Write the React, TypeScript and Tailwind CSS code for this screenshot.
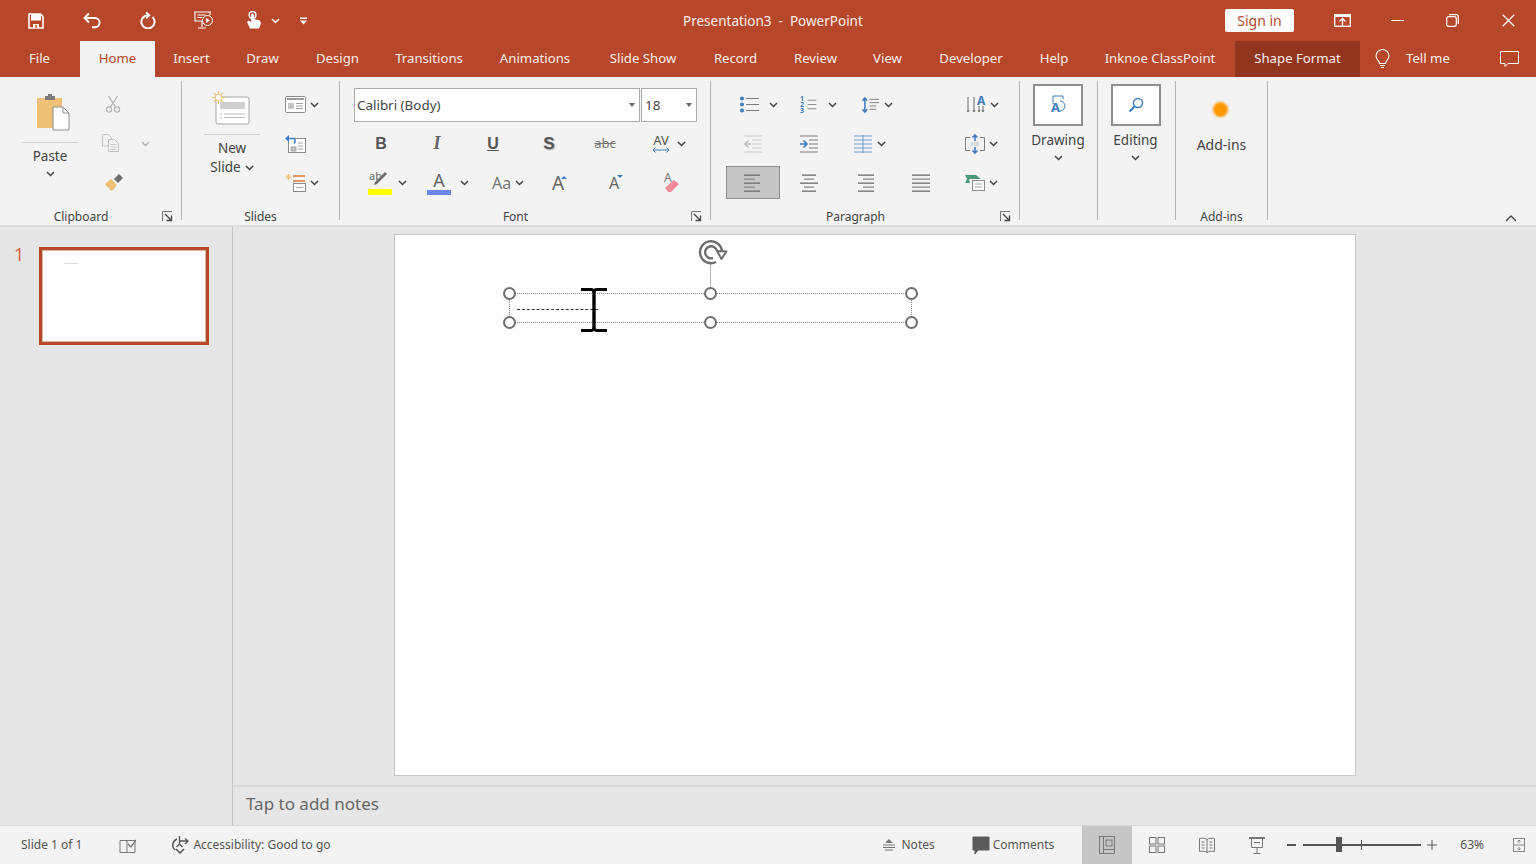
import type { ReactNode } from "react"

const uiFont = "font-['Noto_Sans',sans-serif]"

const tabs = [
  { name: "File", cls: "w-[69px] ml-[5px]" },
  { name: "Home", cls: "w-[75px] ml-[6px] bg-[#f3f3f3] text-[#b7472a]" },
  { name: "Insert", cls: "w-[73px]" },
  { name: "Draw", cls: "w-[69px]" },
  { name: "Design", cls: "w-[81px]" },
  { name: "Transitions", cls: "w-[102px]" },
  { name: "Animations", cls: "w-[110px]" },
  { name: "Slide Show", cls: "w-[106px]" },
  { name: "Record", cls: "w-[79px]" },
  { name: "Review", cls: "w-[81px]" },
  { name: "View", cls: "w-[63px]" },
  { name: "Developer", cls: "w-[104px]" },
  { name: "Help", cls: "w-[62px]" },
  { name: "Inknoe ClassPoint", cls: "w-[150px]" },
  { name: "Shape Format", cls: "w-[125px] bg-[#91351f]" },
]

function Chev({ color = "#444" }: { color?: string }) {
  return (
    <svg width="9" height="6" viewBox="0 0 9 6" className="shrink-0">
      <path d="M1 1l3.5 3.5L8 1" fill="none" stroke={color} strokeWidth="1.5" />
    </svg>
  )
}

function Launcher() {
  return (
    <svg width="11" height="11" viewBox="0 0 11 11" className="absolute right-[8px] bottom-[3px]">
      <path d="M.5 10V.5H10" fill="none" stroke="#777" />
      <path d="M3 3l6 6M9.5 4.5v5h-5" fill="none" stroke="#444" strokeWidth="1.3" />
    </svg>
  )
}

function Group({ label, width, launcher, children }: { label?: string; width: string; launcher?: boolean; children: ReactNode }) {
  return (
    <div className={`relative flex h-[139px] shrink-0 flex-col border-r border-[#b3b3b3] ${width}`}>
      <div className="flex-1">{children}</div>
      <div className={`relative -mb-[5px] h-[16px] text-center text-[12px] leading-[16px] text-[#444] ${launcher ? "pr-[19px]" : ""}`}>
        {label}
        {launcher && <Launcher />}
      </div>
    </div>
  )
}

function Row({ children, className = "" }: { children: ReactNode; className?: string }) {
  return <div className={`flex h-[39px] items-center ${className}`}>{children}</div>
}

function Lines({ kind }: { kind: "left" | "center" | "right" | "justify" }) {
  const rows = kind === "left"
    ? [[0, 16], [0, 11], [0, 16], [0, 11], [0, 16]]
    : kind === "center"
      ? [[2, 14], [4, 10], [0, 18], [4, 10], [2, 14]]
      : kind === "right"
        ? [[2, 16], [7, 11], [2, 16], [7, 11], [2, 16]]
        : [[0, 18], [0, 18], [0, 18], [0, 18], [0, 18]]
  return (
    <svg width="18" height="18" viewBox="0 0 18 18">
      {rows.map(([x, w], i) => (
        <rect key={i} x={x} y={i * 4 + 0.5} width={w} height="1.3" fill={i % 2 ? "#8a8a8a" : "#6d6d6d"} />
      ))}
    </svg>
  )
}

function Handle({ className }: { className: string }) {
  return <div className={`absolute h-[13px] w-[13px] rounded-full border-2 border-[#6e6e6e] bg-white ${className}`} />
}

export default function App() {
  return (
    <div className={`flex h-[864px] w-[1536px] flex-col overflow-hidden bg-[#e6e6e6] ${uiFont}`}>
      {/* title bar */}
      <div className="flex h-[41px] shrink-0 items-center bg-[#b7472a] text-white">
        <div className="ml-[8px] flex items-center">
          <div className="flex w-[56px] justify-center">
            <svg width="16" height="16" viewBox="0 0 16 16">
              <path d="M1 1h11.5L15 3.5V15H1z" fill="none" stroke="#fff" strokeWidth="1.6" />
              <rect x="3" y="1" width="10" height="6.5" fill="#fff" />
              <rect x="5" y="11" width="6" height="4" fill="#fff" />
              <rect x="7.5" y="12" width="1.4" height="3" fill="#b7472a" />
            </svg>
          </div>
          <div className="flex w-[56px] justify-center">
            <svg width="18" height="17" viewBox="0 0 18 17">
              <path d="M6 1.5L1.5 6 6 10.5M2 6h10a4.6 4.6 0 0 1 0 9.2H9" fill="none" stroke="#fff" strokeWidth="1.9" />
            </svg>
          </div>
          <div className="flex w-[55px] justify-center">
            <svg width="17" height="17" viewBox="0 0 17 17">
              <path d="M9 3.200A6.600 6.600 0 1 0 13.500 5" fill="none" stroke="#fff" strokeWidth="2" />
              <path d="M7 .3L10.500 3.200 7 6.500" fill="none" stroke="#fff" strokeWidth="1.700" />
            </svg>
          </div>
          <div className="flex w-[57px] justify-center">
            <svg width="20" height="19" viewBox="0 0 20 19">
              <path d="M0 1h17M1 1v9h8M16 1v3M8 10v6M4 17h8" fill="none" stroke="#fff" strokeWidth="1.1" />
              <path d="M3.5 4h8M3.5 6.5h5" stroke="#fff" />
              <circle cx="13.5" cy="9.5" r="5" fill="none" stroke="#fff" />
              <path d="M12 7l4 2.5-4 2.5z" fill="#fff" />
            </svg>
          </div>
          <div className="flex items-center pl-[14px]">
            <svg width="16" height="19" viewBox="0 0 16 19">
              <circle cx="6.5" cy="4" r="3.4" fill="none" stroke="#fff" strokeWidth="1.4" />
              <path d="M5 4v7L2.5 9.5 1 11l3 6.5h9l2-5-1-3-6-1.5V4a1.5 1.5 0 0 0-3 0z" fill="#fff" />
            </svg>
            <div className="ml-[9px]"><Chev color="#fff" /></div>
            <svg width="7" height="8" viewBox="0 0 7 8" className="ml-[20px]">
              <path d="M0 .5h7V2H0zM0 3.5h7L3.5 7.5z" fill="#fff" />
            </svg>
          </div>
        </div>
        <div className="mt-[1px] ml-[376px] text-[13.5px] whitespace-pre text-[#fbeeea]">Presentation3  -  PowerPoint</div>
        <div className="ml-auto flex items-center">
          <div className="flex h-[23px] w-[69px] items-center justify-center rounded-[2px] bg-white text-[14px] text-[#b7472a]">Sign in</div>
          <div className="flex w-[76px] justify-center pl-[20px]">
            <svg width="17" height="13" viewBox="0 0 17 13">
              <rect x=".7" y=".7" width="15.6" height="11.6" fill="none" stroke="#fff" strokeWidth="1.3" />
              <rect x="1" y="1" width="15" height="2" fill="#fff" />
              <path d="M8.5 12V5M5.5 7.5l3-3 3 3" fill="none" stroke="#fff" strokeWidth="1.3" />
            </svg>
          </div>
          <div className="flex w-[55px] justify-center">
            <div className="h-[1.5px] w-[13px] bg-white" />
          </div>
          <div className="flex w-[55px] justify-center">
            <svg width="13" height="13" viewBox="0 0 13 13">
              <rect x=".7" y="2.7" width="9.6" height="9.6" rx="2" fill="none" stroke="#fff" strokeWidth="1.2" />
              <path d="M3 .7h7.3a2 2 0 0 1 2 2V10" fill="none" stroke="#fff" strokeWidth="1.2" />
            </svg>
          </div>
          <div className="flex w-[56px] justify-center">
            <svg width="13" height="13" viewBox="0 0 13 13">
              <path d="M.7.7l11.6 11.6M12.3.7L.7 12.3" fill="none" stroke="#fff" strokeWidth="1.3" />
            </svg>
          </div>
        </div>
      </div>

      {/* tabs */}
      <div className="flex h-[36px] shrink-0 items-stretch bg-[#b7472a] text-[13.2px] text-[#fbeeea]">
        {tabs.map((t) => (
          <div key={t.name} className={`flex shrink-0 items-center justify-center ${t.cls}`}>{t.name}</div>
        ))}
        <div className="ml-[15px] flex items-center">
          <svg width="15" height="20" viewBox="0 0 15 20">
            <path d="M4.5 14.5c0-2.5-3.5-4-3.5-7.5a6.5 6.5 0 0 1 13 0c0 3.500-3.500 5-3.500 7.500z" fill="none" stroke="#fff" strokeWidth="1.1" />
            <path d="M5 16.500h5M6 18.500h3" stroke="#fff" />
          </svg>
          <span className="ml-[16px]">Tell me</span>
        </div>
        <div className="mr-[17px] ml-auto flex items-center">
          <svg width="19" height="17" viewBox="0 0 19 17">
            <path d="M.5.5h18v12H8l-3 3v-3H.5z" fill="none" stroke="#fff" />
          </svg>
        </div>
      </div>

      {/* ribbon */}
      <div className="flex h-[150px] shrink-0 border-b-2 border-[#dedede] bg-[#f3f3f3] pt-[4px] text-[#444]">
        <Group label="Clipboard" width="w-[182px]" launcher>
          <div className="flex pl-[22px]">
            <div className="flex w-[56px] flex-col items-center pt-[12px]">
              <svg width="34" height="38" viewBox="0 0 34 38" className="ml-[6px]">
                <path d="M1 5h25v30H1z" fill="#eec177" />
                <path d="M9 3h3V1h4v2h3v4H9z" fill="#7c7c7c" />
                <path d="M17 14h10l6 6v17H17z" fill="#fff" stroke="#8e8e8e" />
                <path d="M27 14v6h6" fill="none" stroke="#8e8e8e" />
              </svg>
              <div className="mt-[11px] h-px w-[56px] bg-[#d0d0d0]" />
              <div className="mt-[4px] text-[13.5px] leading-[19px] text-[#444]">Paste</div>
              <div className="mt-[5px]"><Chev /></div>
            </div>
            <div className="flex flex-col pt-[4px] pl-[27px]">
              <Row>
                <svg width="16" height="18" viewBox="0 0 16 18" className="-mt-[1px]">
                  <path d="M3.500 1l7 11M12.500 1l-7 11" stroke="#b4b4b4" strokeWidth="1.3" />
                  <circle cx="4" cy="14.500" r="2.600" fill="none" stroke="#b4b4b4" strokeWidth="1.2" />
                  <circle cx="12" cy="14.500" r="2.600" fill="none" stroke="#b4b4b4" strokeWidth="1.2" />
                </svg>
              </Row>
              <Row className="-ml-[3px]">
                <svg width="17" height="18" viewBox="0 0 17 18" className="-mt-[1px]">
                  <path d="M.5.500h6l3 3V12H.5z" fill="#f3f3f3" stroke="#c2c2c2" />
                  <path d="M6.500 5.500h6l4 4v8h-10z" fill="#f3f3f3" stroke="#c2c2c2" />
                  <path d="M8.500 10.500h6M8.500 13h6M8.500 15.500h6" stroke="#c9c9c9" />
                </svg>
                <div className="ml-[22px]"><Chev color="#b0b0b0" /></div>
              </Row>
              <Row>
                <svg width="19" height="17" viewBox="0 0 19 17">
                  <path d="M0 10l6-5 6 6-5 6-3-2 1-2-2 1z" fill="#eec177" />
                  <path d="M9 5l5-5 4 4-5 5z" fill="#6f6f6f" />
                </svg>
              </Row>
            </div>
          </div>
        </Group>

        <Group label="Slides" width="w-[158px]">
          <div className="flex pl-[22px]">
            <div className="flex w-[56px] flex-col items-center pt-[10px]">
              <svg width="38" height="34" viewBox="0 0 38 34" className="-ml-[2px]">
                <rect x="4" y="6" width="33" height="27" rx="2" fill="#fff" stroke="#a5a5a5" />
                <rect x="8" y="11" width="25" height="7" fill="#cfcfcf" />
                <path d="M12 23h21M12 26.500h21M8 23h2M8 26.500h2" stroke="#bdbdbd" />
                <path d="M6.500 0v13M0 6.500h13M2 2l9 9M11 2l-9 9" stroke="#eec177" strokeWidth="1.2" />
                <circle cx="6.500" cy="6.500" r="3.200" fill="#fff" stroke="#eec177" />
              </svg>
              <div className="mt-[9px] h-px w-[56px] bg-[#d0d0d0]" />
              <div className="mt-[4px] text-[13.5px] leading-[19px]">New</div>
              <div className="flex items-center gap-[4px] text-[13.5px] leading-[19px]">Slide <Chev /></div>
            </div>
            <div className="flex flex-col pt-[4px] pl-[25px]">
              <Row>
                <svg width="21" height="17" viewBox="0 0 21 17">
                  <rect x=".5" y=".5" width="20" height="16" rx="1" fill="#fff" stroke="#8a8a8a" />
                  <path d="M2 3h17" stroke="#9c9c9c" strokeWidth="2" />
                  <rect x="3" y="7" width="6" height="6" fill="#c5c5c5" />
                  <path d="M11 7.500h7M11 10h7M11 12.500h7" stroke="#a0a0a0" />
                </svg>
                <div className="ml-[4px]"><Chev /></div>
              </Row>
              <Row>
                <svg width="21" height="18" viewBox="0 0 21 18">
                  <rect x="3.500" y="3.500" width="17" height="14" fill="#fff" stroke="#8a8a8a" />
                  <path d="M6 12h5v4H6zM13 8h5M13 11h5M13 14h5" fill="#c5c5c5" stroke="#a0a0a0" />
                  <path d="M2.500 3.500H9a3.500 3.500 0 0 1 0 5" fill="none" stroke="#3f7cbc" strokeWidth="1.700" />
                  <path d="M4 0L0 3.500 4 7z" fill="#3f7cbc" />
                </svg>
              </Row>
              <Row>
                <svg width="21" height="19" viewBox="0 0 21 19">
                  <path d="M.5 4h6M3.500 1v6M1 1.500l5 5M6 1.500l-5 5" stroke="#eec177" />
                  <path d="M8 3h12M8 8h12" stroke="#dd7b3f" strokeWidth="1.500" />
                  <rect x="8.500" y="10.500" width="12" height="8" fill="#fff" stroke="#8a8a8a" />
                  <path d="M11 14.500h7" stroke="#a0a0a0" />
                </svg>
                <div className="ml-[4px]"><Chev /></div>
              </Row>
            </div>
          </div>
        </Group>

        <Group label="Font" width="w-[371px]" launcher>
          <div className="pt-[4px] pl-[14px]">
            <Row>
              <div className="flex h-[34px] w-[286px] items-center justify-between border border-[#ababab] bg-white pr-[4px] pl-[2px] text-[13.4px] text-[#444]">
                <span className="pt-px">Calibri (Body)</span>
                <div className="h-0 w-0 border-x-[3.500px] border-t-[4px] border-x-transparent border-t-[#666]" />
              </div>
              <div className="ml-px flex h-[34px] w-[56px] items-center justify-between border border-[#ababab] bg-white pr-[4px] pl-[3px] text-[13.4px] text-[#444]">
                <span className="pt-px">18</span>
                <div className="h-0 w-0 border-x-[3.500px] border-t-[4px] border-x-transparent border-t-[#666]" />
              </div>
            </Row>
            <Row className="-ml-px">
              <div className="flex w-[56px] justify-center font-['Liberation_Sans',sans-serif] text-[16px] font-bold text-[#555]">B</div>
              <div className="flex w-[56px] justify-center font-['Liberation_Serif',serif] text-[18px] font-bold text-[#666] italic">I</div>
              <div className="flex w-[56px] justify-center font-['Liberation_Sans',sans-serif] text-[16px] font-bold text-[#555] underline">U</div>
              <div className="flex w-[56px] justify-center font-['Liberation_Sans',sans-serif] text-[17px] font-bold text-[#555] [text-shadow:1px_1px_1px_#aaa]">S</div>
              <div className="flex w-[56px] justify-center text-[13px] text-[#777] line-through">abc</div>
              <div className="flex w-[56px] items-center pl-[19px]">
                <div className="flex flex-col items-center">
                  <span className="text-[13px] leading-[13px] text-[#555]">AV</span>
                  <svg width="18" height="6" viewBox="0 0 18 6">
                    <path d="M1 3h16M3.500.5L1 3l2.500 2.500M14.500.5L17 3l-2.500 2.500" fill="none" stroke="#3f7cbc" />
                  </svg>
                </div>
                <div className="ml-[7px]"><Chev /></div>
              </div>
            </Row>
            <Row className="-ml-px">
              <div className="flex w-[56px] items-center pl-[15px]">
                <div className="relative h-[24px] w-[24px]">
                  <span className="absolute top-[-3px] left-[1px] text-[11px] text-[#666]">ab</span>
                  <svg width="20" height="16" viewBox="0 0 20 16" className="absolute top-0 left-[5px]">
                    <path d="M1 14l3-1L14 3l-2-2L2 11z" fill="#6e6e6e" />
                  </svg>
                  <div className="absolute right-0 bottom-0 left-0 h-[6px] bg-[#ffff00]" />
                </div>
                <div className="ml-[6px]"><Chev /></div>
              </div>
              <div className="flex w-[56px] items-center pl-[18px]">
                <div className="flex w-[24px] flex-col items-center">
                  <span className="text-[18px] leading-[18px] text-[#666]">A</span>
                  <div className="mt-[1px] h-[5px] w-[24px] bg-[#6c86f5]" />
                </div>
                <div className="ml-[9px]"><Chev /></div>
              </div>
              <div className="flex w-[65px] items-center pl-[27px] text-[16px] text-[#777]">
                Aa
                <div className="ml-[4px]"><Chev /></div>
              </div>
              <div className="relative flex w-[56px] justify-center text-[19px] leading-[22px] text-[#666]">
                A
                <div className="absolute top-[4px] left-[31px] h-0 w-0 border-x-[3px] border-b-[3px] border-x-transparent border-b-[#3f7cbc]" />
              </div>
              <div className="relative flex w-[56px] justify-center text-[16px] leading-[22px] text-[#666]">
                A
                <div className="absolute top-[3px] left-[31px] h-0 w-0 border-x-[3px] border-t-[3px] border-x-transparent border-t-[#3f7cbc]" />
              </div>
              <div className="relative flex h-[22px] w-[56px] justify-center">
                <span className="absolute top-[-3px] left-[22px] text-[12px] text-[#777]">A</span>
                <svg width="18" height="18" viewBox="0 0 18 18" className="absolute top-[4px] left-[22px]">
                  <path d="M1 12l9-8 5 4-8 8H4z" fill="#ee8b98" />
                </svg>
              </div>
            </Row>
          </div>
        </Group>

        <Group label="Paragraph" width="w-[309px]" launcher>
          <div className="flex pt-[4px] pl-[14px]">
            <div className="w-[224px]">
              <Row>
                <div className="flex w-[56px] items-center pl-[15px]">
                  <svg width="19" height="17" viewBox="0 0 19 17">
                    <circle cx="2" cy="2.500" r="2" fill="#3f7cbc" />
                    <circle cx="2" cy="8.500" r="2" fill="#3f7cbc" />
                    <circle cx="2" cy="14.500" r="2" fill="#3f7cbc" />
                    <path d="M6 2.500h13M6 8.500h13M6 14.500h13" stroke="#7d7d7d" strokeWidth="1.200" />
                  </svg>
                  <div className="ml-[10px]"><Chev /></div>
                </div>
                <div className="flex w-[56px] items-center pl-[19px]">
                  <div className="flex flex-col text-[7px] leading-[6px] font-bold text-[#3f7cbc]">
                    <span>1</span><span>2</span><span>3</span>
                  </div>
                  <svg width="14" height="17" viewBox="0 0 14 17" className="ml-[3px]">
                    <path d="M1 2.500h12M1 8.500h12M1 14.500h12" stroke="#7d7d7d" strokeWidth="1.200" />
                  </svg>
                  <div className="ml-[11px]"><Chev /></div>
                </div>
                <div className="flex w-[56px] items-center pl-[25px]">
                  <svg width="20" height="18" viewBox="0 0 20 18">
                    <path d="M3 2v14M.5 4.500L3 1.500l2.500 3M.5 13.500L3 16.500l2.500-3" fill="none" stroke="#3f7cbc" strokeWidth="1.600" />
                    <path d="M8 3h10M8 6.500h10M8 10h7M8 13.500h7" stroke="#7d7d7d" />
                  </svg>
                  <div className="ml-[3px]"><Chev /></div>
                </div>
              </Row>
              <Row>
                <div className="flex w-[56px] items-center pl-[19px]">
                  <svg width="18" height="18" viewBox="0 0 18 18">
                    <path d="M0 1h18M8 5h10M8 9h10M8 13h10M0 17h18" stroke="#c9c9c9" />
                    <path d="M1 9h6M4.500 5.500L1 9l3.500 3.500" fill="none" stroke="#bdbdbd" strokeWidth="1.700" />
                  </svg>
                </div>
                <div className="flex w-[56px] items-center pl-[19px]">
                  <svg width="18" height="18" viewBox="0 0 18 18">
                    <path d="M0 1h18M9 5h9M9 9h9M9 13h9M0 17h18" stroke="#7d7d7d" />
                    <path d="M0 9h6M3.500 5.500L7 9l-3.500 3.500" fill="none" stroke="#3f7cbc" strokeWidth="1.700" />
                  </svg>
                </div>
                <div className="flex w-[56px] items-center pl-[17px]">
                  <svg width="18" height="18" viewBox="0 0 18 18">
                    <path d="M0 1h18M0 5h18M0 9h18M0 13h18M0 17h18M9 0v18" stroke="#6f9fd4" />
                  </svg>
                  <div className="ml-[5px]"><Chev /></div>
                </div>
              </Row>
              <Row>
                <div className="ml-px flex h-[33px] w-[54px] items-center justify-center border border-[#8e8e8e] bg-[#c6c6c6]"><Lines kind="left" /></div>
                <div className="ml-px flex w-[56px] justify-center"><Lines kind="center" /></div>
                <div className="flex w-[56px] justify-center"><Lines kind="right" /></div>
                <div className="flex w-[56px] justify-center"><Lines kind="justify" /></div>
              </Row>
            </div>
            <div className="pl-[16px]">
              <Row>
                <div className="relative ml-[2px] h-[19px] w-[20px]">
                  <svg width="20" height="19" viewBox="0 0 20 19" className="absolute top-0 left-0">
                    <path d="M1 2v14M7 2v14M12 11v5M16 11v5" stroke="#6d6d6d" />
                    <path d="M0 15l1 2 1-2M6 15l1 2 1-2M11 15l1 2 1-2M15 15l1 2 1-2" fill="none" stroke="#6d6d6d" />
                  </svg>
                  <span className="absolute top-[-1px] left-[10px] text-[12px] leading-[13px] font-bold text-[#3f7cbc]">A</span>
                </div>
                <div className="ml-[3px]"><Chev /></div>
              </Row>
              <Row>
                <svg width="20" height="20" viewBox="0 0 20 20">
                  <path d="M5 3.500H.5v13H5M15 3.500h4.500v13H15" fill="none" stroke="#7d7d7d" />
                  <path d="M6 9h8M6 11h8" stroke="#c4c4c4" />
                  <path d="M10 7V1M7.500 3.500L10 1l2.500 2.500M10 13v6M7.500 16.500L10 19l2.500-2.500" fill="none" stroke="#3f7cbc" strokeWidth="1.600" />
                </svg>
                <div className="ml-[4px]"><Chev /></div>
              </Row>
              <Row>
                <svg width="20" height="16" viewBox="0 0 20 16">
                  <path d="M0 0h11l5 4H4l1 4-5 0 2-4z" fill="#4c9a7c" />
                  <rect x="7.500" y="5.500" width="12" height="10" fill="#fff" stroke="#8e8e8e" />
                  <path d="M10 9h7M10 12h7" stroke="#a8a8a8" />
                </svg>
                <div className="ml-[4px]"><Chev /></div>
              </Row>
            </div>
          </div>
        </Group>

        <Group width="w-[78px]">
          <div className="flex flex-col items-center pt-[3px] pr-[1px]">
            <div className="flex h-[42px] w-[50px] items-center justify-center border-2 border-[#8e8e8e] bg-white">
              <div className="relative h-[20px] w-[20px]">
                <svg width="20" height="20" viewBox="0 0 20 20" className="absolute top-0 left-0">
                  <path d="M5 9V1h10v3" fill="none" stroke="#3f7cbc" />
                  <path d="M12 6a5 5 0 1 1 0 10" fill="none" stroke="#3f7cbc" />
                </svg>
                <span className="absolute top-[4px] left-[3px] text-[13px] leading-[16px] font-bold text-[#3f7cbc]">A</span>
              </div>
            </div>
            <div className="mt-[4px] text-[13.5px] leading-[20px]">Drawing</div>
            <div className="mt-[5px]"><Chev /></div>
          </div>
        </Group>

        <Group width="w-[78px]">
          <div className="flex flex-col items-center pt-[3px] pr-[2px]">
            <div className="flex h-[42px] w-[50px] items-center justify-center border-2 border-[#8e8e8e] bg-white">
              <svg width="16" height="16" viewBox="0 0 16 16">
                <circle cx="10" cy="6" r="4.500" fill="none" stroke="#3f7cbc" strokeWidth="1.500" />
                <path d="M6.500 9.500L1.500 14.500" stroke="#3f7cbc" strokeWidth="2" />
              </svg>
            </div>
            <div className="mt-[4px] text-[13.5px] leading-[20px]">Editing</div>
            <div className="mt-[5px]"><Chev /></div>
          </div>
        </Group>

        <Group label="Add-ins" width="w-[92px]">
          <div className="flex flex-col items-center">
            <div className="mt-[21px] mr-[2px] h-[15px] w-[15px] rounded-full bg-[#ff9800] blur-[0.8px]" />
            <div className="mt-[18px] text-[14px] leading-[20px]">Add-ins</div>
          </div>
        </Group>

        <div className="flex flex-1 items-end justify-end pr-[19px] pb-[3px]">
          <svg width="12" height="7" viewBox="0 0 12 7"><path d="M1 6l5-5 5 5" fill="none" stroke="#444" strokeWidth="1.300" /></svg>
        </div>
      </div>

      {/* main */}
      <div className="flex min-h-0 flex-1">
        <div className="flex w-[233px] shrink-0 border-r border-[#c4c4c4] pt-[20px]">
          <div className="-mt-[3px] ml-[14px] w-[25px] text-[18px] leading-[20px] text-[#d9664a]">1</div>
          <div className="h-[98px] w-[170px] border-[3px] border-[#b7472a] bg-white pt-[13px] pl-[22px] shadow-[inset_0_0_0_1px_#e3b4a6]">
            <div className="h-px w-[14px] bg-[#dcdcdc]" />
          </div>
        </div>
        <div className="flex min-w-0 flex-1 flex-col">
          <div className="flex-1 pt-[7px] pl-[161px]">
            <div className="relative h-[542px] w-[962px] border border-[#c6c6c6] bg-white">
              {/* selected text box */}
              <div className="absolute top-[58px] left-[114px] h-[30px] w-[403px] border border-dotted border-[#8a8a8a]">
                <Handle className="-top-[7px] -left-[7px]" />
                <Handle className="-top-[7px] left-[194px]" />
                <Handle className="-top-[7px] -right-[7px]" />
                <Handle className="-bottom-[7px] -left-[7px]" />
                <Handle className="-bottom-[7px] left-[194px]" />
                <Handle className="-right-[7px] -bottom-[7px]" />
                <div className="absolute -top-[31px] left-[200px] h-[24px] w-px bg-[#b5b5b5]" />
                <div className="absolute top-[15px] left-[7px] w-[81px] border-t border-dashed border-[#333]" />
                <svg width="34" height="30" viewBox="0 0 34 30" className="absolute -top-[58px] left-[186px]">
                  <path d="M26 16A11 11 0 1 0 20 26" fill="none" stroke="#6e6e6e" strokeWidth="2.400" />
                  <path d="M21 15a6 6 0 1 0-4 7" fill="none" stroke="#6e6e6e" strokeWidth="2.400" />
                  <path d="M21 15l9.500 .5-5 7.500z" fill="#fff" stroke="#6e6e6e" strokeWidth="2" strokeLinejoin="round" />
                </svg>
                <svg width="26" height="44" viewBox="0 0 26 44" className="absolute -top-[6px] left-[71px]">
                  <path d="M0 1.500h10a3 3 0 0 1 3 2 3 3 0 0 1 3-2h10M0 42.500h10a3 3 0 0 0 3-2 3 3 0 0 0 3 2h10" fill="none" stroke="#000" strokeWidth="3" />
                  <path d="M13 3v38" stroke="#000" strokeWidth="3.400" />
                </svg>
              </div>
            </div>
          </div>
          <div className="flex h-[40px] shrink-0 items-center border-t-2 border-[#d8d8d8] pb-[4px] pl-[13px] text-[17px] text-[#666]">Tap to add notes</div>
        </div>
      </div>

      {/* status bar */}
      <div className="flex h-[39px] shrink-0 items-center border-t border-[#d6d6d6] bg-[#f3f3f3] text-[12px] text-[#555]">
        <span className="ml-[21px]">Slide 1 of 1</span>
        <svg width="17" height="15" viewBox="0 0 17 15" className="ml-[37px]">
          <path d="M8 2.500H1v12h7zM8 2.500h8v12H8" fill="none" stroke="#777" />
          <path d="M9 6l3 3 5-7" fill="none" stroke="#777" strokeWidth="1.300" />
        </svg>
        <svg width="18" height="18" viewBox="0 0 18 18" className="ml-[35px]">
          <path d="M6 3a6.500 6.500 0 0 0-2 11M13 13l-4 4-4-4" fill="none" stroke="#555" strokeWidth="1.500" />
          <path d="M8.500 0v8l-3 3M8.500 8l3 3M8.500 5h8M14 2.500L17 5l-3 3" fill="none" stroke="#555" strokeWidth="1.300" />
        </svg>
        <span className="ml-[4px]">Accessibility: Good to go</span>
        <div className="ml-auto flex h-full items-center">
          <svg width="14" height="12" viewBox="0 0 14 12">
            <path d="M4 3.500l3-3 3 3zM1 6h12M1 8.500h12M3 11h8" fill="#777" stroke="#777" />
          </svg>
          <span className="ml-[6px]">Notes</span>
          <svg width="18" height="19" viewBox="0 0 18 19" className="ml-[37px]">
            <path d="M1 1h16v13H6l-3 4v-4H1z" fill="#5a5a5a" stroke="#5a5a5a" strokeLinejoin="round" />
          </svg>
          <span className="ml-[3px]">Comments</span>
          <div className="ml-[28px] flex h-full w-[50px] items-center justify-center bg-[#c6c6c6]">
            <svg width="16" height="18" viewBox="0 0 16 18">
              <rect x=".5" y=".5" width="15" height="17" fill="none" stroke="#777" />
              <path d="M4.500 .5v17M4.500 13.500h11" stroke="#777" />
              <rect x="7" y="4" width="6" height="6" fill="none" stroke="#777" />
            </svg>
          </div>
          <div className="flex w-[50px] justify-center">
            <svg width="16" height="16" viewBox="0 0 16 16" fill="none" stroke="#777">
              <rect x=".5" y=".5" width="6.500" height="6.500" /><rect x="9" y=".5" width="6.500" height="6.500" />
              <rect x=".5" y="9" width="6.500" height="6.500" /><rect x="9" y="9" width="6.500" height="6.500" />
            </svg>
          </div>
          <div className="flex w-[50px] justify-center">
            <svg width="16" height="17" viewBox="0 0 16 17" fill="none" stroke="#777">
              <path d="M8 2.500C6 1 3 1 .5 1.500v13c2.500-.5 5.500-.5 7.500 1 2-1.500 5-1.500 7.500-1v-13C13 1 10 1 8 2.500zM8 2.500v13M2.500 5h3M2.500 8h3M2.500 11h3M10.500 5h3M10.500 8h3M10.500 11h3" />
            </svg>
          </div>
          <div className="flex w-[49px] justify-center">
            <svg width="16" height="17" viewBox="0 0 16 17" fill="none" stroke="#777">
              <path d="M0 1h16" strokeWidth="2" /><path d="M2.500 1v9.500h11V1M5 5.500h6M8 10.500V16M4.500 16.500h7" />
            </svg>
          </div>
          <div className="ml-[6px] h-[1.500px] w-[9px] bg-[#555]" />
          <div className="relative ml-[7px] h-[2px] w-[118px] bg-[#555]">
            <div className="absolute -top-[7px] left-[33px] h-[15px] w-[6px] bg-[#555]" />
            <div className="absolute -top-[4px] left-[58px] h-[10px] w-px bg-[#555]" />
          </div>
          <svg width="10" height="10" viewBox="0 0 10 10" className="ml-[6px]"><path d="M5 0v10M0 5h10" stroke="#555" /></svg>
          <span className="ml-[23px]">63%</span>
          <svg width="12" height="14" viewBox="0 0 12 14" className="mr-[11px] ml-[29px]" fill="none" stroke="#888">
            <rect x=".5" y=".5" width="11" height="13" />
            <path d="M6 2v3M4.500 3.500L6 2l1.500 1.500M6 12V9M4.500 10.500L6 12l1.500-1.500M1 7h10" />
          </svg>
        </div>
      </div>
    </div>
  )
}
